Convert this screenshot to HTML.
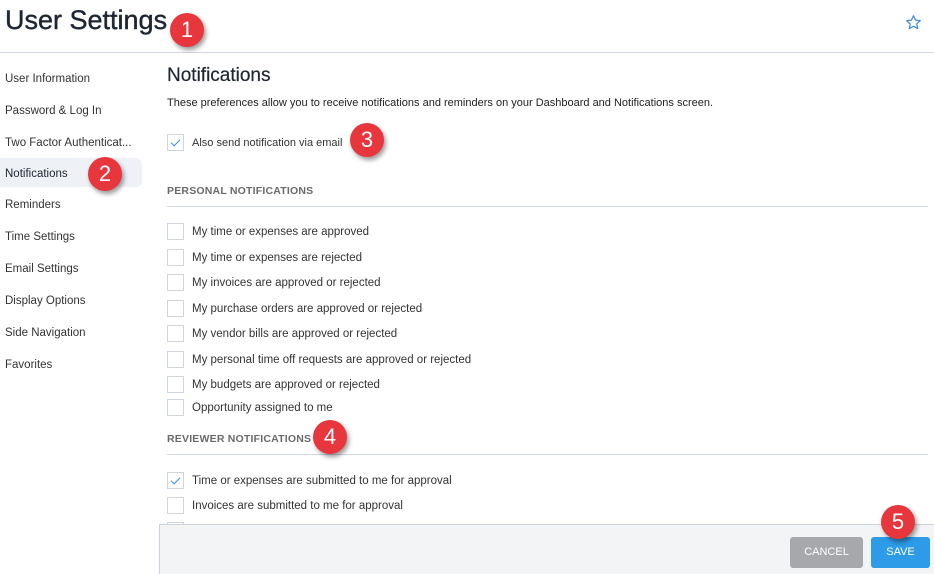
<!DOCTYPE html><html><head><style>
body{margin:0;width:934px;height:573px;overflow:hidden;background:#fff;font-family:"Liberation Sans",sans-serif;position:relative;color:#333}
.a{position:absolute;white-space:nowrap}
.nav{left:5px;font-size:11.5px;color:#333}
.cb{position:absolute;left:167px;width:17px;height:17px;border:1px solid #cfd5dc;background:#fff;box-sizing:border-box}
.lb{left:192px;font-size:11.5px;color:#333}
.b{position:absolute;width:34px;height:34px;border-radius:50%;background:#e8363d;color:#fff;font-size:22px;text-align:center;line-height:34px;box-shadow:2px 3px 5px rgba(0,0,0,.4)}
.ck::after{content:"";position:absolute;left:5px;top:2px;width:4px;height:8px;border:solid #3b8ce0;border-width:0 1.5px 1.5px 0;transform:rotate(45deg)}
.h{left:167px;font-size:11px;color:#666;letter-spacing:.2px}
</style></head><body>
<div class="a" style="left:5px;top:5px;font-size:27px;color:#1e2533;-webkit-text-stroke:.4px #1e2533">User Settings</div>
<svg class="a" style="left:905px;top:14px" width="17" height="17" viewBox="0 0 24 24"><path d="M12 2.5l2.9 6.1 6.6.8-4.9 4.6 1.3 6.6L12 17.3l-5.9 3.3 1.3-6.6-4.9-4.6 6.6-.8z" fill="none" stroke="#3b8ce0" stroke-width="1.8" stroke-linejoin="round"/></svg>
<div class="a" style="left:0;top:52px;width:934px;height:1px;background:#d5dbe3"></div>
<div class="a" style="left:0;top:158px;width:142px;height:29px;background:#eef1f6;border-radius:0 6px 6px 0"></div>
<div class="a nav" style="top:73px">User Information</div>
<div class="a nav" style="top:105px">Password &amp; Log In</div>
<div class="a nav" style="top:137px">Two Factor Authenticat...</div>
<div class="a nav" style="top:168px;color:#1e2533">Notifications</div>
<div class="a nav" style="top:199px">Reminders</div>
<div class="a nav" style="top:231px">Time Settings</div>
<div class="a nav" style="top:263px">Email Settings</div>
<div class="a nav" style="top:295px">Display Options</div>
<div class="a nav" style="top:327px">Side Navigation</div>
<div class="a nav" style="top:359px">Favorites</div>
<div class="a" style="left:167px;top:65px;font-size:19px;color:#1e2533;-webkit-text-stroke:.2px #1e2533">Notifications</div>
<div class="a" style="left:167px;top:97px;font-size:11px;color:#222">These preferences allow you to receive notifications and reminders on your Dashboard and Notifications screen.</div>
<div class="cb ck" style="top:134px"></div><div class="a lb" style="top:137px;font-size:11px">Also send notification via email</div>
<div class="a h" style="top:185px;font-weight:bold;color:#6a6a6a;font-size:10.5px">PERSONAL NOTIFICATIONS</div>
<div class="a" style="left:167px;top:206px;width:761px;height:1px;background:#d5dbe3"></div>
<div class="cb" style="top:223px"></div><div class="a lb" style="top:226px">My time or expenses are approved</div>
<div class="cb" style="top:249px"></div><div class="a lb" style="top:252px">My time or expenses are rejected</div>
<div class="cb" style="top:274px"></div><div class="a lb" style="top:277px">My invoices are approved or rejected</div>
<div class="cb" style="top:300px"></div><div class="a lb" style="top:303px">My purchase orders are approved or rejected</div>
<div class="cb" style="top:325px"></div><div class="a lb" style="top:328px">My vendor bills are approved or rejected</div>
<div class="cb" style="top:351px"></div><div class="a lb" style="top:354px">My personal time off requests are approved or rejected</div>
<div class="cb" style="top:376px"></div><div class="a lb" style="top:379px">My budgets are approved or rejected</div>
<div class="cb" style="top:399px"></div><div class="a lb" style="top:402px">Opportunity assigned to me</div>
<div class="a h" style="top:433px;font-weight:bold;color:#6a6a6a;font-size:10.5px">REVIEWER NOTIFICATIONS</div>
<div class="a" style="left:167px;top:454px;width:761px;height:1px;background:#d5dbe3"></div>
<div class="cb ck" style="top:472px"></div><div class="a lb" style="top:475px">Time or expenses are submitted to me for approval</div>
<div class="cb" style="top:497px"></div><div class="a lb" style="top:500px">Invoices are submitted to me for approval</div>
<div class="cb" style="top:522px"></div>
<div class="a" style="left:159px;top:524px;width:775px;height:49px;background:#f2f4f6;border-top:1px solid #ccd3dc;border-left:1px solid #ccd3dc"></div>
<div class="a" style="left:790px;top:537px;width:73px;height:31px;background:#a6a8ab;border-radius:3px;color:#fff;font-size:11px;text-align:center;line-height:31px">CANCEL</div>
<div class="a" style="left:871px;top:537px;width:59px;height:31px;background:#2d9be8;border-radius:3px;color:#fff;font-size:11px;text-align:center;line-height:31px">SAVE</div>
<div class="b" style="left:170px;top:13px">1</div>
<div class="b" style="left:88px;top:157px">2</div>
<div class="b" style="left:350px;top:123px">3</div>
<div class="b" style="left:313px;top:420px">4</div>
<div class="b" style="left:881px;top:505px">5</div>
</body></html>
